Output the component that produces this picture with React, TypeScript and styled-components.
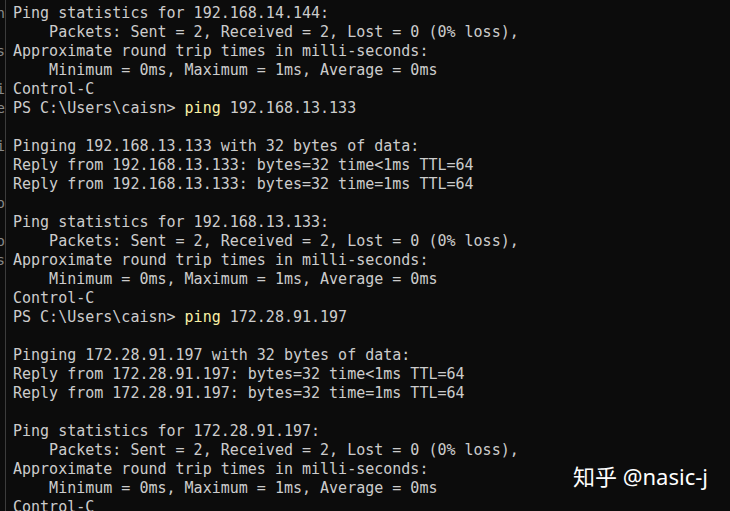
import React from "react";
import styled, { createGlobalStyle } from "styled-components";

const Global = createGlobalStyle`
  html, body { margin: 0; padding: 0; background: #0c0c0c; }
  body { width: 730px; height: 511px; overflow: hidden; }
`;

const Window = styled.div`
  position: relative;
  display: flex;
  width: 730px;
  height: 511px;
  overflow: hidden;
  background: #0c0c0c;
`;

const Edge = styled.div`
  width: 5px;
  flex: none;
  border-right: 1px solid #3c3c3c;
  overflow: hidden;
  color: #8a8a8a;
  font-family: "DejaVu Sans Mono", "Liberation Mono", monospace;
  font-size: 14px;
  line-height: 19px;
  padding-top: 4px;
  white-space: pre;
  direction: rtl;
`;

const Terminal = styled.pre`
  margin: 0;
  padding: 4px 0 0 7px;
  font-family: "DejaVu Sans Mono", "Liberation Mono", monospace;
  font-size: 15px;
  line-height: 19px;
  color: #cccccc;
  white-space: pre;
`;

const Cmd = styled.span`
  color: #f9f1a5;
`;

const Watermark = styled.div`
  position: absolute;
  left: 573px;
  top: 462px;
  color: #ffffff;
  font-family: "Noto Sans", "Noto Sans CJK SC", sans-serif;
  font-size: 22px;
  line-height: 28px;
  white-space: nowrap;
`;

const stats = (ip: string) =>
  `Ping statistics for ${ip}:
    Packets: Sent = 2, Received = 2, Lost = 0 (0% loss),
Approximate round trip times in milli-seconds:
    Minimum = 0ms, Maximum = 1ms, Average = 0ms
Control-C
`;

const Prompt: React.FC<{ ip: string }> = ({ ip }) => (
  <>
    {"PS C:\\Users\\caisn> "}
    <Cmd>ping</Cmd>
    {` ${ip}\n`}
  </>
);

const pinging = (ip: string) =>
  `
Pinging ${ip} with 32 bytes of data:
Reply from ${ip}: bytes=32 time<1ms TTL=64
Reply from ${ip}: bytes=32 time=1ms TTL=64

`;

export default function App() {
  return (
    <Window>
      <Global />
      <Edge>{"n\n\ns\n\ni\ne\n\ni\n\n\no\n\no\ns\n"}</Edge>
      <Terminal>
        {stats("192.168.14.144")}
        <Prompt ip="192.168.13.133" />
        {pinging("192.168.13.133")}
        {stats("192.168.13.133")}
        <Prompt ip="172.28.91.197" />
        {pinging("172.28.91.197")}
        {stats("172.28.91.197")}
      </Terminal>
      <Watermark>知乎 @nasic-j</Watermark>
    </Window>
  );
}
